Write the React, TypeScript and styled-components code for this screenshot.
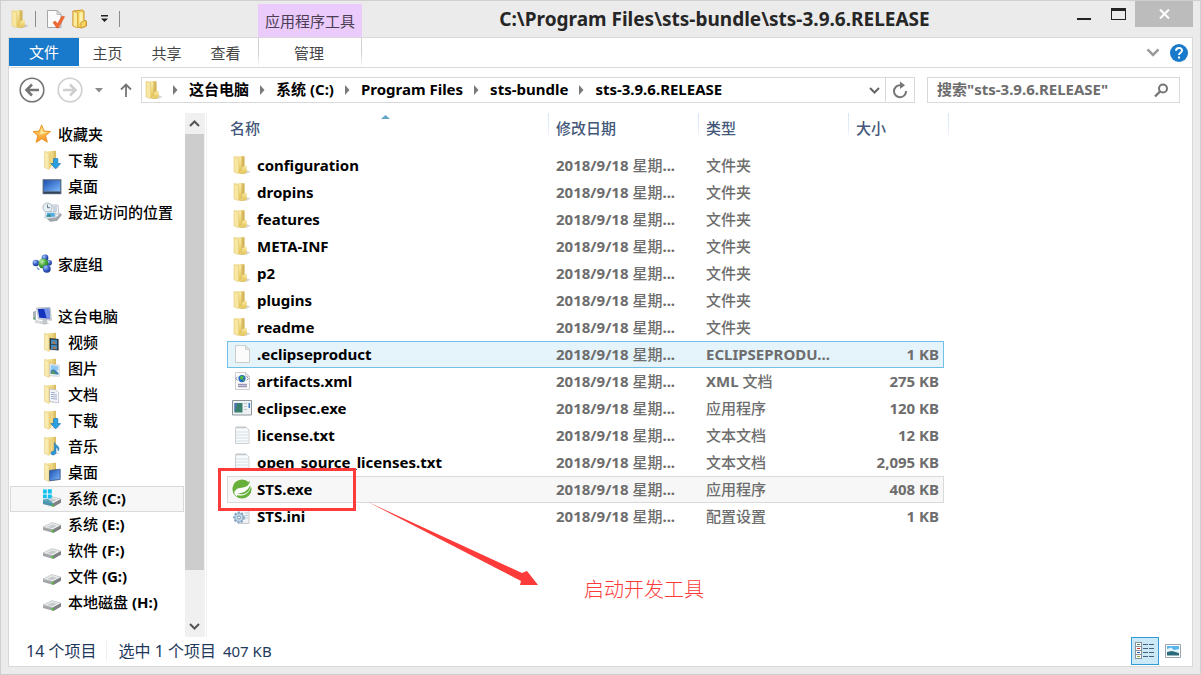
import React from "react";
import styled, { createGlobalStyle } from "styled-components";

const Global = createGlobalStyle`
  *, *::before, *::after { box-sizing: border-box; }
  body { margin: 0; background: #ebebeb; }
  button, input { font: inherit; color: inherit; }
  button { border: 0; padding: 0; background: none; }
  svg { display: block; flex: none; }
`;

const Window = styled.div`
  display: flex;
  flex-direction: column;
  min-height: 100vh;
  padding: 0 7px 7px;
  border: 1px solid #cfcfcf;
  background: #ebebeb;
  color: #000;
  font: 700 15px/20px "Noto Sans", "Noto Sans CJK SC", sans-serif;
`;

const TitleBar = styled.header`
  display: flex;
  height: 36px;
`;

const QuickAccess = styled.div`
  display: flex;
  align-items: center;
  width: 250px;
  padding-left: 2px;
`;

const Divider = styled.span`
  width: 1px;
  height: 16px;
  background: #8c8c8c;
  margin: 0 10px 0 5px;
`;

const QuickButtons = styled.div`
  display: flex;
  align-items: center;
  gap: 4px;
`;

const QuickButton = styled.button`
  display: flex;
  justify-content: center;
  width: 20px;
`;

const ContextTitle = styled.div`
  width: 104px;
  margin-top: 3px;
  background: #eacbfc;
  color: #4a3d52;
  font-weight: 400;
  line-height: 34px;
  text-align: center;
`;

const WindowTitle = styled.h1`
  flex: 1;
  margin: 0;
  color: #262626;
  font-size: 19px;
  line-height: 36px;
  text-align: center;
  white-space: nowrap;
`;

const WindowControls = styled.div`
  display: flex;
  align-items: flex-start;
`;

const ControlButton = styled.button<{ $close?: boolean }>`
  display: flex;
  align-items: center;
  justify-content: center;
  width: ${(p) => (p.$close ? 58 : 34)}px;
  height: 26px;
  background: ${(p) => (p.$close ? "#bcbcbc" : "none")};
`;

const Client = styled.div`
  display: flex;
  flex: 1;
  flex-direction: column;
  border: 1px solid #d9d9d9;
  background: #fff;
`;

const Ribbon = styled.nav`
  display: flex;
  height: 30px;
  border-bottom: 1px solid #d9dadb;
  color: #444;
  font-weight: 400;
`;

const FileTab = styled.button`
  width: 70px;
  height: 28px;
  background: #1979ca;
  color: #fff;
`;

const Tab = styled.button`
  width: 59px;
  height: 29px;
  padding-right: 2px;
`;

const ContextTab = styled.button`
  width: 104px;
  height: 29px;
  margin-left: 2px;
  padding-right: 2px;
  border-left: 1px solid;
  border-right: 1px solid;
  border-image: linear-gradient(#d0d0d0, #d0d0d0 50%, #fff) 1;
`;

const RibbonEnd = styled.div`
  display: flex;
  align-items: center;
  gap: 10px;
  margin-left: auto;
  padding-right: 4px;
`;

const NavRow = styled.div`
  display: flex;
  align-items: center;
  height: 45px;
  padding: 0 12px 1px 10px;
`;

const NavButton = styled.button<{ $gap: number }>`
  display: flex;
  margin-right: ${(p) => p.$gap}px;
`;

const AddressBar = styled.div`
  display: flex;
  flex: 1;
  align-items: center;
  height: 26px;
  border: 1px solid #d9d9d9;
  padding-left: 2px;
`;

const Crumb = styled.button<{ $first?: boolean }>`
  padding: 0 10px 2px 11px;
  white-space: nowrap;
  font-weight: 700;
`;

const CrumbList = styled.div`
  display: flex;
  align-items: center;
  margin-left: 8px;
`;

const AddressEnd = styled.div`
  display: flex;
  align-items: center;
  margin-left: auto;
  height: 100%;
`;

const AddressButton = styled.button<{ $ruled?: boolean }>`
  display: flex;
  align-items: center;
  justify-content: center;
  width: ${(p) => (p.$ruled ? 29 : 22)}px;
  height: 100%;
  border-left: ${(p) => (p.$ruled ? "1px solid #d9d9d9" : "0")};
`;

const SearchBox = styled.label`
  display: flex;
  align-items: center;
  width: 253px;
  height: 26px;
  margin-left: 12px;
  padding: 0 10px 0 9px;
  border: 1px solid #d9d9d9;
`;

const SearchInput = styled.input`
  flex: 1;
  min-width: 0;
  padding: 0 0 2px;
  border: 0;
  outline: 0;
  background: none;
  &::placeholder { color: #6d6d6d; opacity: 1; }
`;

const Body = styled.div`
  display: flex;
  flex: 1;
`;

const Sidebar = styled.nav`
  width: 176px;
  padding: 9px 1px 20px;
`;

const TreeGroup = styled.ul`
  margin: 0 0 26px;
  padding: 0;
  list-style: none;
  &:last-child { margin: 0; }
`;

const TreeItem = styled.a<{ $root?: boolean; $active?: boolean }>`
  display: flex;
  align-items: center;
  gap: 6px;
  height: 26px;
  padding-bottom: 2px;
  padding-left: ${(p) => (p.$root ? 21 : 31)}px;
  border: 1px solid ${(p) => (p.$active ? "#dadada" : "transparent")};
  background: ${(p) => (p.$active ? "#f7f7f7" : "none")};
  color: #000;
  text-decoration: none;
  white-space: nowrap;
`;

const TextRun = styled.span<{ $han: boolean }>`
  font-weight: ${(p) => (p.$han ? 500 : 700)};
`;

const ScrollBar = styled.div`
  display: flex;
  flex-direction: column;
  width: 22px;
  padding-right: 1px;
  border-right: 1px solid #f0f0f0;
`;

const ScrollButton = styled.button`
  display: flex;
  align-items: center;
  justify-content: center;
  height: 21px;
  padding-right: 2px;
  background: #f0f0f0;
`;

const Track = styled.div`
  flex: 1;
  padding: 0 1px 46px 0;
  background: #f0f0f0;
`;

const Thumb = styled.div`
  height: 100%;
  background: #cdcdcd;
`;

const Details = styled.main`
  position: relative;
  flex: 1;
  padding-left: 20px;
`;

const FileTable = styled.table`
  width: 722px;
  border-collapse: separate;
  border-spacing: 0;
  table-layout: fixed;
`;

const HeadCell = styled.th<{ $w: number; $ruled?: boolean }>`
  width: ${(p) => p.$w}px;
  height: 39px;
  padding: 2px 0 0;
  color: #44587a;
  font-weight: 500;
  text-align: left;
  vertical-align: top;
  background: ${(p) =>
    p.$ruled
      ? "linear-gradient(#d5e5f5, #e4eef9 60%, #fff) right top / 1px 26px no-repeat"
      : "none"};
`;

const SortSlot = styled.div`
  display: flex;
  justify-content: center;
  height: 3px;
  padding-right: 6px;
`;

const HeadLabel = styled.div<{ $first?: boolean }>`
  padding-left: ${(p) => (p.$first ? 3 : 7)}px;
`;

const Row = styled.tr<{ $mark?: "hover" | "selected" }>`
  --line: ${(p) => (p.$mark === "hover" ? "#70c0e7" : p.$mark ? "#dadada" : "transparent")};
  --fill: ${(p) => (p.$mark === "hover" ? "#e5f3fb" : p.$mark ? "#f7f7f7" : "transparent")};
`;

const Cell = styled.td<{ $first?: boolean; $end?: boolean }>`
  height: 27px;
  padding: 0 ${(p) => (p.$end ? 4 : 0)}px 2px ${(p) => (p.$first ? 4 : 7)}px;
  border: solid var(--line);
  border-width: 1px ${(p) => (p.$end ? 1 : 0)}px 1px ${(p) => (p.$first ? 1 : 0)}px;
  background: var(--fill);
  color: ${(p) => (p.$first ? "#000" : "#6d6d6d")};
  text-align: ${(p) => (p.$end ? "right" : "left")};
  white-space: nowrap;
`;

const NameBox = styled.span`
  display: flex;
  align-items: center;
  gap: 5px;
`;

const Highlight = styled.div`
  position: absolute;
  left: 11px;
  top: 355px;
  width: 138px;
  height: 43px;
  border: 3px solid #fc3b3a;
`;

const Arrow = styled.svg`
  position: absolute;
  left: 160px;
  top: 387px;
`;

const Note = styled.p`
  position: absolute;
  left: 377px;
  top: 463px;
  margin: 0;
  color: #fc3b3a;
  font-size: 20px;
  font-weight: 300;
  line-height: 28px;
`;

const StatusBar = styled.footer`
  display: flex;
  align-items: center;
  height: 29px;
  padding: 0 5px 1px 17px;
  color: #1e395b;
  font-size: 16px;
  font-weight: 400;
`;

const StatusText = styled.span<{ $ruled?: boolean; $small?: boolean }>`
  margin-right: ${(p) => (p.$ruled ? 11 : 7)}px;
  padding-right: ${(p) => (p.$ruled ? 10 : 0)}px;
  border-right: ${(p) => (p.$ruled ? "1px solid #f0f0f0" : "0")};
  font-size: ${(p) => (p.$small ? 15 : 16)}px;
`;

const ViewSwitch = styled.div`
  display: flex;
  margin-left: auto;
`;

const ViewButton = styled.button<{ $on?: boolean }>`
  display: flex;
  align-items: center;
  justify-content: center;
  width: 28px;
  height: 28px;
  border: 1px solid ${(p) => (p.$on ? "#2f9cd6" : "transparent")};
  background: ${(p) => (p.$on ? "#cbe8f6" : "none")};
`;

/* Gradients shared by the icons */
const DefsSvg = styled.svg`
  position: absolute;
`;

const Defs = () => (
  <DefsSvg width="0" height="0" aria-hidden="true">
    <defs>
      <linearGradient id="fold" x1="0" y1="0" x2="1" y2="0">
        <stop offset="0" stopColor="#fcf0b4" />
        <stop offset="0.6" stopColor="#efd98a" />
        <stop offset="1" stopColor="#d6b75a" />
      </linearGradient>
      <linearGradient id="foldFront" x1="0" y1="0" x2="0" y2="1">
        <stop offset="0" stopColor="#f9eba8" />
        <stop offset="1" stopColor="#e3c04c" />
      </linearGradient>
      <linearGradient id="blue" x1="0" y1="0" x2="1" y2="1">
        <stop offset="0" stopColor="#1a4fb4" />
        <stop offset="1" stopColor="#7db8fa" />
      </linearGradient>
      <linearGradient id="star" x1="0" y1="0" x2="0" y2="1">
        <stop offset="0" stopColor="#ffe27a" />
        <stop offset="1" stopColor="#f78f1e" />
      </linearGradient>
      <radialGradient id="ballBlue" cx="0.35" cy="0.3" r="0.8">
        <stop offset="0" stopColor="#a8c8ff" />
        <stop offset="0.5" stopColor="#3a62c8" />
        <stop offset="1" stopColor="#162f86" />
      </radialGradient>
      <radialGradient id="ballGreen" cx="0.35" cy="0.3" r="0.8">
        <stop offset="0" stopColor="#c9f2b0" />
        <stop offset="0.5" stopColor="#46a83c" />
        <stop offset="1" stopColor="#1c6a22" />
      </radialGradient>
    </defs>
  </DefsSvg>
);

const Svg = ({ size = 20, children }: { size?: number; children: React.ReactNode }) => (
  <svg width={size} height={size} viewBox="0 0 20 20" aria-hidden="true">{children}</svg>
);

const Folder = () => (
  <Svg>
    <path d="M12 14l6.5 2.8-4 2-7 .2z" fill="#000" opacity=".16" />
    <path d="M2.5 1.5l9.5-.5.6 1v14l-6.500 1.200z" fill="url(#fold)" />
    <path d="M9 2.500h3v13L9 16z" fill="#c9a648" opacity=".45" />
    <path d="M2 1.500l4.600 1.600v15.600L2 16.800z" fill="#f7e7a2" stroke="#e2c774" strokeWidth=".6" />
    <path d="M7 2.600l2.400-.4v15L7 18.400z" fill="url(#foldFront)" />
    <path d="M10 12.600l4-2 .8.8v5.800l-3.400 1.800-4.400-.4 3-1.400z" fill="url(#foldFront)" />
  </Svg>
);

const GoldFolder = () => (
  <Svg>
    <path d="M3 2l9-1 2 1v9l2.500 1.500v4.500l-5 2-8.500-2.200z" fill="#f0cf5c" stroke="#c8922a" strokeWidth=".9" />
    <path d="M3 2l4.600 1.800v15L3 17z" fill="#fdeb9c" stroke="#d39b30" strokeWidth=".8" />
    <path d="M9.400 3.400h3.400v9.200l-3.400 2z" fill="#fff3b4" />
    <path d="M11 13l5-1.600v5.600L11 19z" fill="#f7d666" stroke="#c8922a" strokeWidth=".7" />
  </Svg>
);

const FolderBase = ({ children }: { children: React.ReactNode }) => (
  <Svg>
    <path d="M12 15l6 2-3 1.600-6 .2z" fill="#000" opacity=".12" />
    <path d="M3 1.400L14 .8v14l-8 2.600z" fill="url(#fold)" />
    <path d="M2.400 1.400L7 3v16.400l-4.600-2z" fill="#f9eab0" stroke="#e3cb80" strokeWidth=".6" />
    <path d="M7 3l2-.4v15L7 19.200z" fill="#eed27a" />
    {children}
  </Svg>
);

const DownloadFolder = () => (
  <FolderBase>
    <path d="M11.600 8.600h4.200v5h2.800l-4.900 5.200-4.900-5.200h2.800z" fill="#2ba0e0" stroke="#1a75b5" strokeWidth=".7" />
  </FolderBase>
);
const VideoFolder = () => (
  <FolderBase>
    <path d="M7.600 6l9 1v11.500l-9-1z" fill="#2a3540" />
    <path d="M9 7.500l6 .5v4.400l-6-.5zM9 12.800l6 .5v4.200l-6-.5z" fill="#3c8ec2" />
    <path d="M10 11l2-2 1.800 3.200zM10 16.600l2.600-2.400 1.800 2.600z" fill="#d06c38" />
  </FolderBase>
);
const PictureFolder = () => (
  <FolderBase>
    <path d="M7.600 5.800l9.800 1.200v11.400l-9.800-1.200z" fill="#f6f8fa" stroke="#b7bec4" strokeWidth=".5" />
    <path d="M8.600 7l7.800 1v4.600l-7.800 1z" fill="#8cc6f2" />
    <path d="M8.600 12.600l3.400-1.400 4.400 3.600v2l-7.800-1z" fill="#3d7fae" />
    <path d="M8.600 14.400l3-1.400 2 3-5-.4z" fill="#5d9c56" />
  </FolderBase>
);
const DocFolder = () => (
  <FolderBase>
    <path d="M7.600 5l5.600.6 3.400 3v10.200l-9-1.400z" fill="#f3f5fa" stroke="#a7acb8" strokeWidth=".6" />
    <path d="M9 8.400l4 .4M9 10.400l6 .7M9 12.400l6 .8M9 14.400l6 .9" stroke="#8a9cc4" strokeWidth=".8" />
  </FolderBase>
);
const MusicFolder = () => (
  <FolderBase>
    <path d="M12.400 6.400c.6 2.600 4.800 3 4.600 6.600-.2 1.600-1 2-1 2 .4-2.400-1-3-2-3.400V16c0 3.600-5 3.800-5 1.200 0-1.800 2-2.600 3.400-2.200z" fill="#2d95d4" stroke="#1a6ea8" strokeWidth=".5" />
  </FolderBase>
);
const DesktopFolder = () => (
  <FolderBase>
    <path d="M7.600 8.400l10.600-1.200v10.200l-10.600 1.400z" fill="url(#blue)" stroke="#39537c" strokeWidth=".8" />
  </FolderBase>
);

const Star = () => (
  <Svg>
    <path d="M9.600 1l2.500 6 6.400.5-4.900 4.200 1.700 6.500-5.500-3.400-5.600 3.600 1.600-6.600L1 7.600l6.300-.6z" fill="url(#star)" stroke="#e88a1c" strokeWidth=".9" strokeLinejoin="round" />
    <path d="M9.600 3.400l1.700 4.400 4 .4-8 3z" fill="#fff2b0" opacity=".7" />
  </Svg>
);
const Desktop = () => (
  <Svg>
    <path d="M.6 3.200h18.800v15H.6z" fill="#56697f" />
    <path d="M1.800 4.400h16.400v10.800H1.800z" fill="url(#blue)" />
    <path d="M1.800 16h16.400v1.400H1.800z" fill="#33435a" />
  </Svg>
);
const Recent = () => (
  <Svg>
    <path d="M8 3h8l1 9H8z" fill="#f3f5f7" stroke="#a4acb3" strokeWidth=".7" />
    <path d="M11 5h4M11 7h4M11 9h4" stroke="#7b98b4" strokeWidth=".7" />
    <circle cx="5.500" cy="5.500" r="4.600" fill="#e9f0f4" stroke="#a9b6c0" />
    <path d="M5.500 2.600v3.100h2.600" stroke="#5a6f80" strokeWidth=".9" fill="none" />
    <path d="M4 9.500h9l1.600 6.500H2.600z" fill="#eef4f8" stroke="#a9b2b9" strokeWidth=".6" />
    <path d="M5 10.800h7.400l.8 4H4.400z" fill="#54aee0" />
    <path d="M4.600 13.600l3-1.600 2 2.800H4.400z" fill="#3a8a90" />
    <path d="M5.500 17l9-1 3.600-4.500 1.500 1.300-4.400 5.600-7 1z" fill="#a5abb0" stroke="#7e868c" strokeWidth=".5" />
  </Svg>
);
const HomeGroup = () => (
  <Svg>
    <circle cx="13" cy="4" r="3.400" fill="url(#ballBlue)" />
    <circle cx="3.800" cy="9" r="3.200" fill="url(#ballBlue)" />
    <circle cx="17.200" cy="8.800" r="2.800" fill="url(#ballBlue)" />
    <circle cx="11.400" cy="9.600" r="5" fill="url(#ballGreen)" />
    <circle cx="14.800" cy="14.800" r="3.900" fill="url(#ballBlue)" />
    <path d="M4 12l4 3.500-2 .6z" fill="#6d8fd0" />
  </Svg>
);
const Computer = () => (
  <Svg>
    <path d="M1 6l3-1.400v10L1 13.400z" fill="#aab3bb" />
    <path d="M1.600 11.600h1.600V13H1.600z" fill="#3fae49" />
    <path d="M10.600 14l4-.4.8 2.800 2 .8-5 1.600-4-1.600 2-.8z" fill="#c3c8cc" />
    <path d="M4.600 2l13.600-.6 1.200 12.800L6.400 13z" fill="#d5dae0" stroke="#9ea6ae" strokeWidth=".6" />
    <path d="M5.800 3l11.400-.5.9 10.200-10.800-.9z" fill="#1534bd" />
    <path d="M12 2.800l5.200-.3.9 10.200-3.400-.3z" fill="#8fa9f2" opacity=".8" />
    <path d="M4 14.600l6 1-1 2-6-1.400z" fill="#e2e5e8" stroke="#b0b5ba" strokeWidth=".5" />
  </Svg>
);
const DriveShape = () => (
  <>
    <path d="M1 12l9-4.400 9 2.600v3.400L11.600 18 1 15z" fill="#a3a6a8" />
    <path d="M1 12l9-4.400 9 2.600-8 4.400z" fill="#e9ebec" stroke="#b5b8ba" strokeWidth=".5" />
    <path d="M11 14.600l8-4.400v3.200l-7.600 4.400z" fill="#7c8083" />
    <path d="M5 12l5.400-2.400 4.400 1.200-4.600 2.400z" fill="#c7cacc" />
    <path d="M9.600 14.800l1.800.4v2.400l-1.800-.4z" fill="#4cc22c" />
  </>
);
const Drive = () => <Svg><g transform="translate(0 1)"><DriveShape /></g></Svg>;
const SystemDrive = () => (
  <Svg>
    <g transform="translate(0 1)"><DriveShape /></g>
    <path d="M1 11.600l5 -.6 5 4-1 3-9-2z" fill="#2c8dad" opacity=".75" />
    <path d="M1 1.600h3.800v3.800H1zM5.800 1.200h4v4.200h-4zM1 6.400h3.800v3.800H1zM5.800 6.400h4v4h-4z" fill="#14c0f0" />
  </Svg>
);

const Page = ({ children }: { children?: React.ReactNode }) => (
  <Svg>
    <path d="M3.500 1.500h10l4 4v13h-14z" fill="#fbfbfb" stroke="#cbcdcf" />
    <path d="M13.500 1.500v4h4z" fill="#e4e6e8" stroke="#c3c5c7" strokeWidth=".7" />
    {children}
  </Svg>
);
const TextPage = () => (
  <Svg>
    <path d="M3.500 2.500h11L17 5v13.500H3.500z" fill="#f8fafb" stroke="#cdd0d3" />
    <path d="M5 1v2.500M7 1v2.500M9 1v2.500M11 1v2.500M13 1v2.500" stroke="#b4b9bd" strokeWidth=".8" />
    <path d="M4 7h12M4 10h12M4 13h12M4 16h12" stroke="#d2dfe7" strokeWidth="1.200" />
  </Svg>
);
const XmlPage = () => (
  <Page>
    <circle cx="10" cy="7.600" r="3.600" fill="#2468c4" />
    <path d="M8 5.500l3-.8 1 2-2 2.400-2-1zM11 8.500l2 .2-1.400 2z" fill="#4fb548" />
    <path d="M5.400 5.800L3.800 7.600l1.600 1.800M14.800 5.800l1.600 1.800-1.600 1.800" stroke="#7f8ea0" fill="none" />
    <path d="M6 13.500h9M6 15.500h9" stroke="#9a93b4" strokeWidth="1.400" />
  </Page>
);
const AppWindow = () => (
  <Svg>
    <path d="M.5 2.500h19V17H.5z" fill="#eef1f3" stroke="#8e979e" />
    <path d="M2.500 5h8v9.500h-8z" fill="#39806f" />
    <path d="M2.500 5h3l-3 9.500z" fill="#4d73b4" />
    <path d="M12 5.500h3M12 8.500h3M12 11.500h3" stroke="#bcc3c8" />
    <path d="M16.500 5H18v5h-1.500z" fill="#3c79c4" />
  </Svg>
);
const Spring = () => (
  <Svg>
    <circle cx="10" cy="10" r="9.600" fill="#68b03c" />
    <path d="M18.200 1.800c2 6.500-.6 13.200-7.200 14.400-3 .5-5.600.1-8.200-.8-.6-1.600-.4-3.200.2-4.400C4.600 8.400 7.600 8 11 7.700c3.400-.3 5.800-2.300 7.200-5.900z" fill="#fff" />
    <path d="M18 6.600c.6 4.400-2.600 8-7 8.600-2.500.3-4.600 0-6-.4 5.600-.4 10.400-2.400 13-8.200z" fill="#68b03c" />
    <path d="M.6 8.600C2.500 6 6 5.200 10 5c4-.2 6.600-1.400 8-3.200-.6 4-3.200 6.300-7 6.800-4 .5-7 1-8 4z" fill="#68b03c" />
    <circle cx="4.400" cy="16" r=".9" fill="#fff" />
  </Svg>
);
const IniPage = () => (
  <Svg>
    <path d="M6.500 2.500h8L17 5v12.500H6.500z" fill="#f1f4f6" stroke="#c3c8cc" />
    <path d="M13 7h3M13 9.500h3M13 12h3" stroke="#b9ccd8" />
    <circle cx="7" cy="11.500" r="5" fill="#d6e4ef" stroke="#7f9fbc" strokeWidth="1.600" strokeDasharray="2.200 1.400" />
    <circle cx="7" cy="11.500" r="4" fill="#c9dcea" stroke="#86a6c2" strokeWidth=".8" />
    <circle cx="7" cy="11.500" r="1.500" fill="#fff" stroke="#6f93b4" />
  </Svg>
);
const CheckedPage = () => (
  <Svg>
    <path d="M1.500 1.500h9.500l4 4v13H1.500z" fill="#fbfbfb" stroke="#a4a6a9" />
    <path d="M11 1.500v4h4z" fill="#e0e2e4" stroke="#a4a6a9" strokeWidth=".7" />
    <path d="M7 13.500l2-1.500 2.500 2.600L16 7l2.600.8L12.400 19h-1.600z" fill="#ef6a35" stroke="#d55424" strokeWidth=".5" />
  </Svg>
);

const Chevron = ({ up, color, bold }: { up?: boolean; color: string; bold?: boolean }) => (
  <svg width={bold ? 14 : 11} height={bold ? 11 : 9} viewBox="0 0 11 9" aria-hidden="true">
    <path d={up ? "M1 7l4.500-4.500L10 7" : "M1 2l4.500 4.500L10 2"} fill="none" stroke={color} strokeWidth="2" />
  </svg>
);
const CrumbArrow = () => (
  <svg width="6" height="10" viewBox="0 0 6 10" aria-hidden="true"><path d="M1 0l4.500 5L1 10z" fill="#7a7a7a" /></svg>
);
const RoundArrow = ({ forward }: { forward?: boolean }) => (
  <svg width="26" height="26" viewBox="0 0 26 26" aria-hidden="true">
    <g fill="none" stroke={forward ? "#cfcfcf" : "#757575"} transform={forward ? "matrix(-1 0 0 1 26 0)" : undefined}>
      <circle cx="13" cy="13" r="11.800" strokeWidth="1.600" />
      <path d="M20 13H8M13 7.500L7.500 13l5.500 5.500" strokeWidth="2.600" />
    </g>
  </svg>
);

/* Han characters are set in a lighter weight than the Latin text beside them */
const Mixed = ({ text }: { text: string }) => (
  <span>
    {text.split(/([\u4e00-\u9fff]+)/).filter(Boolean).map((run, i) => (
      <TextRun key={i} $han={/[\u4e00-\u9fff]/.test(run)}>{run}</TextRun>
    ))}
  </span>
);

type Item = { label: string; icon: React.ComponentType; active?: boolean };

const groups: Item[][] = [
  [
    { label: "收藏夹", icon: Star },
    { label: "下载", icon: DownloadFolder },
    { label: "桌面", icon: Desktop },
    { label: "最近访问的位置", icon: Recent },
  ],
  [{ label: "家庭组", icon: HomeGroup }],
  [
    { label: "这台电脑", icon: Computer },
    { label: "视频", icon: VideoFolder },
    { label: "图片", icon: PictureFolder },
    { label: "文档", icon: DocFolder },
    { label: "下载", icon: DownloadFolder },
    { label: "音乐", icon: MusicFolder },
    { label: "桌面", icon: DesktopFolder },
    { label: "系统 (C:)", icon: SystemDrive, active: true },
    { label: "系统 (E:)", icon: Drive },
    { label: "软件 (F:)", icon: Drive },
    { label: "文件 (G:)", icon: Drive },
    { label: "本地磁盘 (H:)", icon: Drive },
  ],
];

type FileRow = {
  name: string;
  icon: React.ComponentType;
  type: string;
  size?: string;
  mark?: "hover" | "selected";
};

const folders = ["configuration", "dropins", "features", "META-INF", "p2", "plugins", "readme"];

const files: FileRow[] = [
  ...folders.map((name) => ({ name, icon: Folder, type: "文件夹" })),
  { name: ".eclipseproduct", icon: Page, type: "ECLIPSEPRODU...", size: "1 KB", mark: "hover" },
  { name: "artifacts.xml", icon: XmlPage, type: "XML 文档", size: "275 KB" },
  { name: "eclipsec.exe", icon: AppWindow, type: "应用程序", size: "120 KB" },
  { name: "license.txt", icon: TextPage, type: "文本文档", size: "12 KB" },
  { name: "open_source_licenses.txt", icon: TextPage, type: "文本文档", size: "2,095 KB" },
  { name: "STS.exe", icon: Spring, type: "应用程序", size: "408 KB", mark: "selected" },
  { name: "STS.ini", icon: IniPage, type: "配置设置", size: "1 KB" },
];

const crumbs = ["这台电脑", "系统 (C:)", "Program Files", "sts-bundle", "sts-3.9.6.RELEASE"];

export default function App() {
  return (
    <Window>
      <Global />
      <Defs />
      <TitleBar>
        <QuickAccess>
          <Folder />
          <Divider />
          <QuickButtons>
            <QuickButton aria-label="属性"><CheckedPage /></QuickButton>
            <QuickButton aria-label="新建文件夹"><GoldFolder /></QuickButton>
            <QuickButton aria-label="自定义快速访问工具栏">
              <svg width="9" height="8" viewBox="0 0 9 8" aria-hidden="true">
                <path d="M1 0h7v1.500H1zM1 3.500h7L4.500 7z" fill="#222" />
              </svg>
            </QuickButton>
          </QuickButtons>
          <Divider />
        </QuickAccess>
        <ContextTitle>应用程序工具</ContextTitle>
        <WindowTitle>C:\Program Files\sts-bundle\sts-3.9.6.RELEASE</WindowTitle>
        <WindowControls>
          <ControlButton aria-label="最小化">
            <svg width="14" height="14" viewBox="0 0 14 14" aria-hidden="true"><path d="M0 11h14v2H0z" fill="#222" /></svg>
          </ControlButton>
          <ControlButton aria-label="最大化">
            <svg width="15" height="12" viewBox="0 0 15 12" aria-hidden="true"><path d="M0 0h15v12H0zM1 3v8h13V3z" fill="#222" fillRule="evenodd" /></svg>
          </ControlButton>
          <ControlButton $close aria-label="关闭">
            <svg width="11" height="10" viewBox="0 0 11 10" aria-hidden="true"><path d="M1 .5l9 9M10 .5l-9 9" stroke="#fff" strokeWidth="2" /></svg>
          </ControlButton>
        </WindowControls>
      </TitleBar>
      <Client>
        <Ribbon>
          <FileTab>文件</FileTab>
          <Tab>主页</Tab>
          <Tab>共享</Tab>
          <Tab>查看</Tab>
          <ContextTab>管理</ContextTab>
          <RibbonEnd>
            <Chevron color="#9a9a9a" bold />
            <button aria-label="帮助">
              <svg width="18" height="18" viewBox="0 0 18 18" aria-hidden="true">
                <circle cx="9" cy="9" r="9" fill="#1979ca" />
                <path d="M6 6.800C6 3 12 3 12 6.500 12 8.800 9 8.600 9 11" fill="none" stroke="#fff" strokeWidth="2" />
                <path d="M8 12.500h2v2H8z" fill="#fff" />
              </svg>
            </button>
          </RibbonEnd>
        </Ribbon>
        <NavRow>
          <NavButton $gap={12} aria-label="后退"><RoundArrow /></NavButton>
          <NavButton $gap={12} aria-label="前进"><RoundArrow forward /></NavButton>
          <NavButton $gap={17} aria-label="最近浏览的位置">
            <svg width="8" height="5" viewBox="0 0 8 5" aria-hidden="true"><path d="M0 0h8L4 4.500z" fill="#8a8a8a" /></svg>
          </NavButton>
          <NavButton $gap={9} aria-label="向上">
            <svg width="12" height="14" viewBox="0 0 12 14" aria-hidden="true"><path d="M6 14V2M1 6.500l5-5 5 5" fill="none" stroke="#757575" strokeWidth="1.800" /></svg>
          </NavButton>
          <AddressBar>
            <Folder />
            <CrumbList>
              {crumbs.map((c) => (
                <React.Fragment key={c}>
                  <CrumbArrow />
                  <Crumb>{c}</Crumb>
                </React.Fragment>
              ))}
            </CrumbList>
            <AddressEnd>
              <AddressButton aria-label="以前的位置"><Chevron color="#666" /></AddressButton>
              <AddressButton $ruled aria-label="刷新">
                <svg width="16" height="18" viewBox="0 0 16 18" aria-hidden="true">
                  <path d="M14 10A6 6 0 1 1 8 4.200" fill="none" stroke="#757575" strokeWidth="2" />
                  <path d="M8 .5l5 3.700-5 3.800z" fill="#757575" />
                </svg>
              </AddressButton>
            </AddressEnd>
          </AddressBar>
          <SearchBox>
            <SearchInput type="search" aria-label="搜索" placeholder={'搜索"sts-3.9.6.RELEASE"'} />
            <svg width="15" height="15" viewBox="0 0 15 15" aria-hidden="true">
              <circle cx="9" cy="5.500" r="4" fill="none" stroke="#757575" strokeWidth="2" />
              <path d="M6 8.500L1 13.500" stroke="#757575" strokeWidth="2.400" />
            </svg>
          </SearchBox>
        </NavRow>
        <Body>
          <Sidebar aria-label="导航窗格">
            {groups.map((g, i) => (
              <TreeGroup key={i}>
                {g.map(({ label, icon: Icon, active }, j) => (
                  <li key={label}>
                    <TreeItem href="#" $root={j === 0} $active={active}>
                      <Icon />
                      <Mixed text={label} />
                    </TreeItem>
                  </li>
                ))}
              </TreeGroup>
            ))}
          </Sidebar>
          <ScrollBar>
            <ScrollButton aria-label="向上滚动"><Chevron up color="#555" /></ScrollButton>
            <Track><Thumb /></Track>
            <ScrollButton aria-label="向下滚动"><Chevron color="#555" /></ScrollButton>
          </ScrollBar>
          <Details>
            <FileTable>
              <thead>
                <tr>
                  <HeadCell $w={322} $ruled>
                    <SortSlot>
                      <svg width="9" height="4" viewBox="0 0 9 4" aria-hidden="true"><path d="M0 4L4.500 0 9 4z" fill="#5fa5c8" /></svg>
                    </SortSlot>
                    <HeadLabel $first>名称</HeadLabel>
                  </HeadCell>
                  <HeadCell $w={150} $ruled><SortSlot /><HeadLabel>修改日期</HeadLabel></HeadCell>
                  <HeadCell $w={150} $ruled><SortSlot /><HeadLabel>类型</HeadLabel></HeadCell>
                  <HeadCell $w={95}><SortSlot /><HeadLabel>大小</HeadLabel></HeadCell>
                  <HeadCell as="td" $w={5} $ruled />
                </tr>
              </thead>
              <tbody>
                {files.map(({ name, icon: Icon, type, size, mark }) => (
                  <Row key={name} $mark={mark}>
                    <Cell $first><NameBox><Icon />{name}</NameBox></Cell>
                    <Cell><Mixed text="2018/9/18 星期..." /></Cell>
                    <Cell><Mixed text={type} /></Cell>
                    <Cell $end>{size}</Cell>
                  </Row>
                ))}
              </tbody>
            </FileTable>
            <Highlight />
            <Arrow width="172" height="86" viewBox="0 0 172 86" aria-hidden="true">
              <path d="M1 2L155 73l5-2 11 14h-18l1-4z" fill="#fc3b3a" />
            </Arrow>
            <Note>启动开发工具</Note>
          </Details>
        </Body>
        <StatusBar>
          <StatusText $ruled>14 个项目</StatusText>
          <StatusText>选中 1 个项目</StatusText>
          <StatusText $small>407 KB</StatusText>
          <ViewSwitch>
            <ViewButton $on aria-label="详细信息">
              <svg width="20" height="18" viewBox="0 0 20 18" aria-hidden="true">
                <g fill="#fff" stroke="#8a9299">
                  <rect x=".5" y=".5" width="6" height="4" /><rect x=".5" y="4.500" width="6" height="4" />
                  <rect x=".5" y="8.500" width="6" height="4" /><rect x=".5" y="12.500" width="6" height="4" />
                </g>
                <path d="M2 2.500h3" stroke="#4a8a4a" /><path d="M2 6.500h3" stroke="#d03030" />
                <path d="M2 10.500h3" stroke="#3060c0" /><path d="M2 14.500h3" stroke="#80b040" />
                <path d="M8 2.500h5M14 2.500h5M8 6.500h5M14 6.500h5M8 10.500h5M14 10.500h5M8 14.500h5M14 14.500h5" stroke="#46627c" />
              </svg>
            </ViewButton>
            <ViewButton aria-label="大图标">
              <svg width="16" height="14" viewBox="0 0 16 14" aria-hidden="true">
                <path d="M.5.5h15v13H.5z" fill="#fff" stroke="#9aa5b0" />
                <path d="M2 2h12v6H2z" fill="#58b4ec" />
                <path d="M2 5l4-1.500L9 6l5-1v3H2z" fill="#e2f3fc" />
                <path d="M2 8l5-1 7 2v2.500H2z" fill="#2a6a7a" />
              </svg>
            </ViewButton>
          </ViewSwitch>
        </StatusBar>
      </Client>
    </Window>
  );
}
